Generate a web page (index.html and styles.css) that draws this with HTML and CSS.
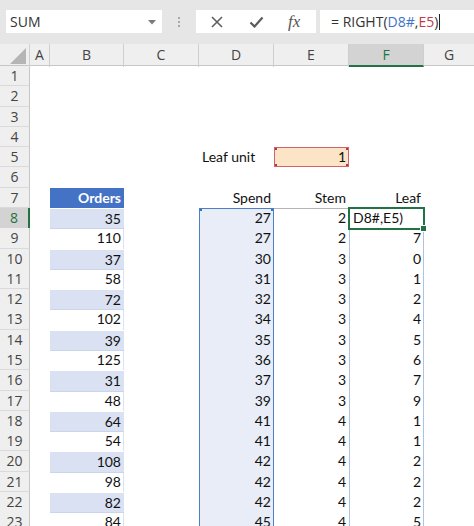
FILE: index.html
```html
<!DOCTYPE html>
<html>
<head>
<meta charset="utf-8">
<link rel="stylesheet" href="styles.css">
</head>
<body>
<div class="toolbar">
  <div class="namebox"><span>SUM</span><svg class="caret" width="8" height="5" viewBox="0 0 8 5"><path d="M0 0H8L4 4.5Z" fill="#7a7a7a"/></svg></div>
  <div class="grip"><i></i><i></i><i></i></div>
  <div class="btns">
    <svg class="ico-x" width="12" height="12" viewBox="0 0 12 12"><path d="M1 1L11 11M11 1L1 11" stroke="#5a5a5a" stroke-width="1.5" fill="none"/></svg>
    <svg class="ico-ok" width="15" height="12" viewBox="0 0 15 12"><path d="M1.5 6.5L5.5 10.5L13.5 1.5" stroke="#5a5a5a" stroke-width="2.2" fill="none"/></svg>
    <span class="fx">fx</span>
  </div>
  <div class="formula">= RIGHT(<span class="ref-d">D8#</span>,<span class="ref-e">E5</span>)<span class="cursor"></span></div>
</div>
<div class="sheet">
  <div class="r hdr"><div class="corner"></div><div class="ch">A</div><div class="ch">B</div><div class="ch">C</div><div class="ch">D</div><div class="ch">E</div><div class="ch sel">F</div><div class="ch last">G</div></div>
  <div class="r"><div class="rh">1</div></div>
  <div class="r"><div class="rh">2</div></div>
  <div class="r"><div class="rh">3</div></div>
  <div class="r"><div class="rh">4</div></div>
  <div class="r"><div class="rh">5</div><div></div><div></div><div></div><div class="c lbl">Leaf unit</div><div class="c unit">1</div></div>
  <div class="r"><div class="rh">6</div></div>
  <div class="r"><div class="rh">7</div><div></div><div class="c oh">Orders</div><div></div><div class="c">Spend</div><div class="c">Stem</div><div class="c">Leaf</div></div>
  <div class="r"><div class="rh sel">8</div><div></div><div class="c ob">35</div><div></div><div class="c sp top">27</div><div class="c e8">2</div><div class="c act">D8#,E5)</div></div>
  <div class="r"><div class="rh">9</div><div></div><div class="c ow">110</div><div></div><div class="c sp">27</div><div class="c">2</div><div class="c lf">7</div></div>
  <div class="r"><div class="rh">10</div><div></div><div class="c ob">37</div><div></div><div class="c sp">30</div><div class="c">3</div><div class="c lf">0</div></div>
  <div class="r"><div class="rh">11</div><div></div><div class="c ow">58</div><div></div><div class="c sp">31</div><div class="c">3</div><div class="c lf">1</div></div>
  <div class="r"><div class="rh">12</div><div></div><div class="c ob">72</div><div></div><div class="c sp">32</div><div class="c">3</div><div class="c lf">2</div></div>
  <div class="r"><div class="rh">13</div><div></div><div class="c ow">102</div><div></div><div class="c sp">34</div><div class="c">3</div><div class="c lf">4</div></div>
  <div class="r"><div class="rh">14</div><div></div><div class="c ob">39</div><div></div><div class="c sp">35</div><div class="c">3</div><div class="c lf">5</div></div>
  <div class="r"><div class="rh">15</div><div></div><div class="c ow">125</div><div></div><div class="c sp">36</div><div class="c">3</div><div class="c lf">6</div></div>
  <div class="r"><div class="rh">16</div><div></div><div class="c ob">31</div><div></div><div class="c sp">37</div><div class="c">3</div><div class="c lf">7</div></div>
  <div class="r"><div class="rh">17</div><div></div><div class="c ow">48</div><div></div><div class="c sp">39</div><div class="c">3</div><div class="c lf">9</div></div>
  <div class="r"><div class="rh">18</div><div></div><div class="c ob">64</div><div></div><div class="c sp">41</div><div class="c">4</div><div class="c lf">1</div></div>
  <div class="r"><div class="rh">19</div><div></div><div class="c ow">54</div><div></div><div class="c sp">41</div><div class="c">4</div><div class="c lf">1</div></div>
  <div class="r"><div class="rh">20</div><div></div><div class="c ob">108</div><div></div><div class="c sp">42</div><div class="c">4</div><div class="c lf">2</div></div>
  <div class="r"><div class="rh">21</div><div></div><div class="c ow">98</div><div></div><div class="c sp">42</div><div class="c">4</div><div class="c lf">2</div></div>
  <div class="r"><div class="rh">22</div><div></div><div class="c ob">82</div><div></div><div class="c sp">42</div><div class="c">4</div><div class="c lf">2</div></div>
  <div class="r"><div class="rh">23</div><div></div><div class="c ow">84</div><div></div><div class="c sp">45</div><div class="c">4</div><div class="c lf">5</div></div>
</div>
</body>
</html>
```
FILE: styles.css
```css
* { box-sizing: border-box; }
html, body { margin: 0; padding: 0; }
body {
  width: 474px;
  height: 526px;
  overflow: hidden;
  background: #ffffff;
  font-family: "Open Sans", "Noto Sans", sans-serif;
}

/* formula bar */
.toolbar {
  height: 44px;
  background: #e6e6e6;
  display: flex;
  align-items: flex-start;
  padding: 10px 0 0 6px;
}
.namebox {
  width: 156px;
  height: 23px;
  background: #fff;
  display: flex;
  align-items: center;
  justify-content: space-between;
  padding: 0 6px 0 4px;
  font-size: 14px;
  color: #333;
}
.caret { margin-top: 1px; }
.grip {
  width: 34px;
  height: 23px;
  display: flex;
  flex-direction: column;
  align-items: center;
  justify-content: center;
  gap: 2px;
}
.grip i {
  display: block;
  width: 2px;
  height: 2px;
  background: #a8a8a8;
}
.btns {
  width: 120px;
  height: 23px;
  background: #fff;
  display: flex;
  align-items: center;
  padding-left: 15px;
}
.ico-ok { margin-left: 26px; }
.fx {
  margin-left: 24px;
  font-family: "Liberation Serif", "DejaVu Serif", serif;
  font-style: italic;
  font-size: 17px;
  color: #555;
  line-height: 1;
}
.formula {
  flex: 1;
  margin-left: 4px;
  height: 23px;
  background: #fff;
  padding-left: 11px;
  font-size: 14px;
  line-height: 23px;
  color: #333;
  white-space: nowrap;
  display: flex;
  align-items: center;
}
.ref-d { color: #3c74c8; }
.ref-e { color: #c23a48; }
.cursor {
  display: inline-block;
  width: 1px;
  height: 16px;
  background: #222;
  margin-left: 1px;
}

/* sheet */
.r {
  display: grid;
  grid-template-columns: 30px 20px 74px 75px 75px 75px 75px 1fr;
  height: 20.29px;
}
.hdr {
  height: 22px;
  background: #efefef;
  border-bottom: 1px solid #c6c6c6;
}
.corner {
  position: relative;
  border-right: 1px solid #d0d0d0;
}
.corner::after {
  content: "";
  position: absolute;
  right: 3px;
  bottom: 3px;
  width: 0;
  height: 0;
  border-left: 16px solid transparent;
  border-bottom: 16px solid #b5b5b5;
}
.ch {
  text-align: center;
  font-size: 14px;
  line-height: 21px;
  color: #444;
  border-right: 1px solid #cfcfcf;
}
.ch.last { border-right: 0; }
.ch.sel {
  background: #d3d3d3;
  color: #217346;
  border-bottom: 2px solid #217346;
}
.rh {
  background: #efefef;
  border-bottom: 1px solid #dadada;
  border-right: 1px solid #c6c6c6;
  text-align: center;
  font-size: 14px;
  line-height: 19px;
  color: #444;
}
.rh.sel {
  background: #d3d3d3;
  color: #217346;
  border-right: 2px solid #217346;
}

.c {
  font-family: "Lato", "Open Sans", sans-serif;
  font-size: 14px;
  font-variant-numeric: tabular-nums;
  line-height: 20px;
  color: #111;
  text-align: right;
  padding: 0 3px;
  white-space: nowrap;
}
.lbl { text-align: left; }
.unit {
  background:
    linear-gradient(#c0303c, #c0303c) left top / 3px 3px no-repeat,
    linear-gradient(#c0303c, #c0303c) right top / 3px 3px no-repeat,
    linear-gradient(#c0303c, #c0303c) left bottom / 3px 3px no-repeat,
    linear-gradient(#c0303c, #c0303c) right bottom / 3px 3px no-repeat,
    #fce4c6;
  box-shadow: inset 0 0 0 1px #d2616b;
}
.oh {
  background: #4472c4;
  color: #fff;
  font-weight: bold;
}
.ob {
  background: #d9e1f2;
  border-top: 1px solid #fff;
}
.ow {
  background: #fff;
  box-shadow: inset 0 1px #c9d5ec, inset -1px 0 #d9e1f2;
}
.sp {
  background: #e8edf7;
  box-shadow: inset 1px 0 #4d7ec8, inset -1px 0 #4d7ec8;
}
.sp.top {
  background:
    linear-gradient(#3a6fc0, #3a6fc0) left top / 3px 3px no-repeat,
    linear-gradient(#3a6fc0, #3a6fc0) right top / 3px 3px no-repeat,
    #e8edf7;
  box-shadow: inset 1px 0 #4d7ec8, inset -1px 0 #4d7ec8, inset 0 1px #4d7ec8;
}
.e8 { box-shadow: inset 0 1px #b5b5b5; }
.lf { box-shadow: inset 1px 0 #aec3e4, inset -1px 0 #aec3e4; }
.act {
  position: relative;
  text-align: left;
  padding-left: 4px;
}
.act::before {
  content: "";
  position: absolute;
  left: -1px;
  top: -1px;
  right: -1px;
  bottom: -1px;
  border: 2px solid #217346;
}
.act::after {
  content: "";
  position: absolute;
  right: -3px;
  bottom: -3px;
  width: 5px;
  height: 5px;
  background: #217346;
  border: 1px solid #fff;
}
```
